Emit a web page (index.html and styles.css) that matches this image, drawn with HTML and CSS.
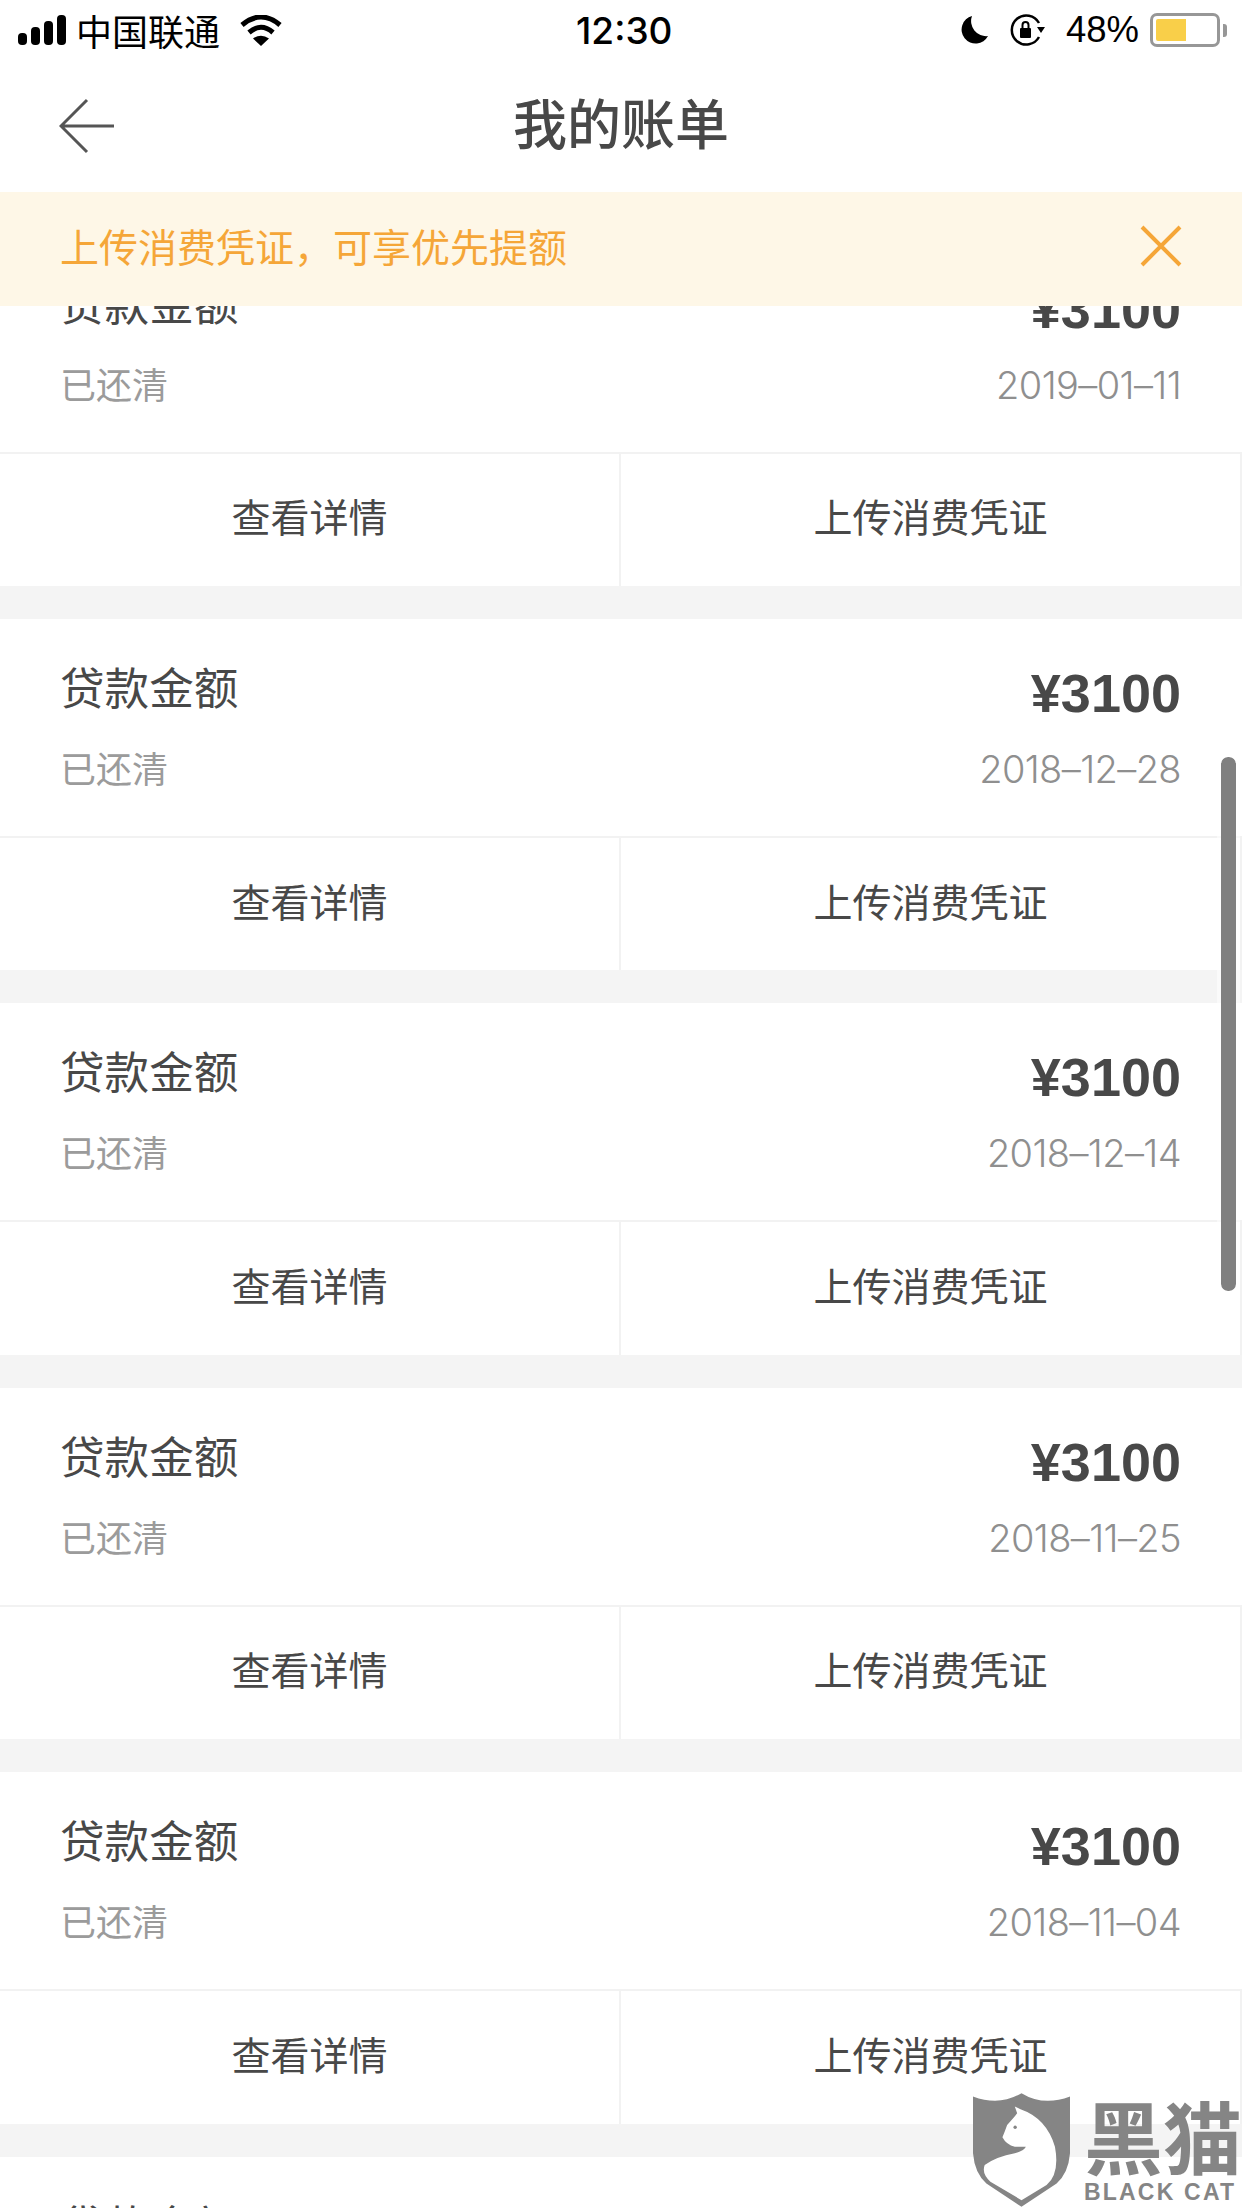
FILE: index.html
```html
<!DOCTYPE html>
<html lang="zh-CN">
<head>
  <meta charset="UTF-8" />
  <title>我的账单</title>
  <link rel="stylesheet" href="styles.css">
</head>
<body>
  <div class="phone">
    <div class="status-bar">
      <div class="status-left">
        <svg class="signal" width="48" height="30" viewBox="0 0 48 30">
          <rect x="0" y="18" width="9" height="12" rx="4" />
          <rect x="13" y="12" width="9" height="18" rx="4" />
          <rect x="26" y="6" width="9" height="24" rx="4" />
          <rect x="39" y="0" width="9" height="30" rx="4" />
        </svg>
        <span class="carrier">中国联通</span>
        <svg class="wifi" width="42" height="31" viewBox="0 0 42 31">
          <path d="M2 10Q21-6 40 10" fill="none" stroke="#000" stroke-width="5" />
          <path d="M9 17.500Q21 7 33 17.500" fill="none" stroke="#000" stroke-width="5" />
          <path d="M13 23.500Q21 18 29 23.500L21 31Z" />
        </svg>
      </div>
      <div class="status-time">12:30</div>
      <div class="status-right">
        <svg class="moon" width="28" height="28" viewBox="0 0 28 28">
          <path d="M11 0A14 14 0 1 0 27 20A15 15 0 0 1 11 0Z" />
        </svg>
        <svg class="rotate-lock" width="36" height="32" viewBox="0 0 36 32">
          <path d="M29 23A14.500 14.500 0 1 1 29 9" fill="none" stroke="#000" stroke-width="2.500" />
          <path d="M27 13L35 13L31 19Z" />
          <rect x="10" y="14" width="11" height="10" rx="1" />
          <path d="M12.500 14V11A3 3 0 0 1 18.500 11V14" fill="none" stroke="#000" stroke-width="2" />
        </svg>
        <span class="battery-pct">48%</span>
        <div class="battery">
          <div class="battery-body"><div class="battery-fill"></div></div>
          <div class="battery-nub"></div>
        </div>
      </div>
    </div>

    <header class="nav">
      <svg class="back" width="56" height="56" viewBox="0 0 56 56">
        <path d="M28 2L2 28L28 54M2 28H55" fill="none" stroke="#555" stroke-width="3" />
      </svg>
      <h1>我的账单</h1>
    </header>

    <main class="content">
      <div class="notice">
        <span class="notice-text">上传消费凭证，可享优先提额</span>
        <svg class="notice-close" width="42" height="42" viewBox="0 0 42 42">
          <path d="M2 2L40 40M40 2L2 40" fill="none" stroke="#f5a638" stroke-width="4" />
        </svg>
      </div>

      <div class="list">
        <section class="bill">
          <div class="bill-info">
            <div><div class="bill-label">贷款金额</div><div class="bill-state">已还清</div></div>
            <div class="bill-right"><div class="bill-amount">¥3100</div><div class="bill-date">2019–01–11</div></div>
          </div>
          <div class="bill-actions"><a>查看详情</a><a>上传消费凭证</a></div>
        </section>
        <section class="bill">
          <div class="bill-info">
            <div><div class="bill-label">贷款金额</div><div class="bill-state">已还清</div></div>
            <div class="bill-right"><div class="bill-amount">¥3100</div><div class="bill-date">2018–12–28</div></div>
          </div>
          <div class="bill-actions"><a>查看详情</a><a>上传消费凭证</a></div>
        </section>
        <section class="bill">
          <div class="bill-info">
            <div><div class="bill-label">贷款金额</div><div class="bill-state">已还清</div></div>
            <div class="bill-right"><div class="bill-amount">¥3100</div><div class="bill-date">2018–12–14</div></div>
          </div>
          <div class="bill-actions"><a>查看详情</a><a>上传消费凭证</a></div>
        </section>
        <section class="bill">
          <div class="bill-info">
            <div><div class="bill-label">贷款金额</div><div class="bill-state">已还清</div></div>
            <div class="bill-right"><div class="bill-amount">¥3100</div><div class="bill-date">2018–11–25</div></div>
          </div>
          <div class="bill-actions"><a>查看详情</a><a>上传消费凭证</a></div>
        </section>
        <section class="bill">
          <div class="bill-info">
            <div><div class="bill-label">贷款金额</div><div class="bill-state">已还清</div></div>
            <div class="bill-right"><div class="bill-amount">¥3100</div><div class="bill-date">2018–11–04</div></div>
          </div>
          <div class="bill-actions"><a>查看详情</a><a>上传消费凭证</a></div>
        </section>
        <section class="bill">
          <div class="bill-info">
            <div><div class="bill-label">贷款金额</div></div>
          </div>
        </section>
      </div>

      <div class="scrollbar"></div>

      <div class="watermark">
        <svg class="watermark-logo" width="97" height="114" viewBox="220 130 290 340">
          <path fill="#858585" d="M220 140Q300 170 365 130Q430 170 510 140L510 310Q505 370 470 400L365 470L260 400Q225 370 220 310Z" />
          <path fill="#fff" d="M345 170L362 178Q440 205 465 290Q480 370 440 405L365 450L272 395Q245 370 255 345Q290 320 345 310Q375 300 378 290L345 290Q320 285 308 262Q315 245 322 225Q345 200 352 190Z" />
          <circle cx="346" cy="232" r="5" fill="#858585" />
        </svg>
        <div class="watermark-text">
          <div class="watermark-cn">黑猫</div>
          <div class="watermark-en">BLACK CAT</div>
        </div>
      </div>
    </main>
  </div>
</body>
</html>
```

FILE: styles.css
```css
* {
  box-sizing: border-box;
}
body {
  margin: 0;
  font-family: "Noto Sans CJK SC", sans-serif;
  background-color: #fff;
  color: #484848;
}
.phone {
  width: 1242px;
  height: 2208px;
  display: flex;
  flex-direction: column;
  overflow: hidden;
}

/* status bar */
.status-bar {
  height: 60px;
  flex: none;
  display: flex;
  align-items: center;
  justify-content: space-between;
  color: #000;
  position: relative;
}
.status-left, .status-right {
  display: flex;
  align-items: center;
}
.status-left {
  padding-left: 18px;
}
.signal {
  margin-right: 10px;
}
.carrier {
  font-size: 36px;
  line-height: 40px;
  width: 144px;
  white-space: nowrap;
}
.wifi {
  margin-left: 20px;
}
.status-time {
  position: absolute;
  left: 576px;
  top: 11px;
  font-family: "Inter", sans-serif;
  font-weight: 500;
  font-size: 37px;
  line-height: 40px;
}
.status-right {
  padding-right: 15px;
}
.moon {
  margin-right: 21px;
}
.rotate-lock {
  margin-right: 20px;
}
.battery-pct {
  font-family: "Liberation Sans", sans-serif;
  font-size: 36.5px;
  line-height: 40px;
  margin-right: 11px;
}
.battery {
  display: flex;
  align-items: center;
}
.battery-body {
  width: 70px;
  height: 34px;
  border: 3px solid #979797;
  border-radius: 7px;
  padding: 3px;
}
.battery-fill {
  width: 30px;
  height: 100%;
  background-color: #f9cf49;
  border-radius: 2px 0 0 2px;
}
.battery-nub {
  width: 4px;
  height: 13px;
  margin-left: 3px;
  background-color: #979797;
  border-radius: 0 3px 3px 0;
}

/* nav */
.nav {
  height: 132px;
  flex: none;
  position: relative;
  display: flex;
  align-items: center;
  justify-content: center;
}
.nav h1 {
  margin: 0;
  font-size: 54px;
  font-weight: 500;
  line-height: 60px;
  color: #484848;
  margin-top: -8px;
}
.back {
  position: absolute;
  left: 59px;
  top: 38px;
}

/* list */
.content {
  flex: 1;
  position: relative;
  overflow: hidden;
  background-color: #f4f4f4;
}
.notice {
  position: absolute;
  left: 0;
  top: 0;
  right: 0;
  height: 114px;
  padding: 0 60px 6px 60px;
  display: flex;
  align-items: center;
  justify-content: space-between;
  background-color: #fef7e7;
  color: #f5a638;
  font-size: 39px;
  z-index: 2;
}
.notice-text {
  margin-bottom: 3px;
}
.list {
  padding-top: 42.6px;
}
.bill {
  height: 351.4px;
  margin-bottom: 33px;
  background-color: #fff;
}
.bill-info {
  height: 217px;
  padding: 44px 61px 0 60px;
  display: flex;
  justify-content: space-between;
}
.bill-label {
  font-size: 44.6px;
  line-height: 46px;
}
.bill-state {
  margin-top: 38px;
  font-size: 36px;
  line-height: 40px;
  color: #9b9b9b;
}
.bill-right {
  text-align: right;
  padding-top: 2px;
}
.bill-amount {
  font-family: "Liberation Sans", sans-serif;
  font-size: 54px;
  font-weight: 700;
  line-height: 56px;
}
.bill-date {
  margin-top: 28px;
  font-family: "Inter", sans-serif;
  font-weight: 300;
  font-size: 38px;
  letter-spacing: -0.6px;
  line-height: 40px;
  color: #8f8f8f;
}
.bill-actions {
  height: 134.4px;
  border-top: 2px solid #f2f2f2;
  display: flex;
}
.bill-actions a {
  width: 50%;
  display: flex;
  align-items: center;
  justify-content: center;
  padding-bottom: 9px;
  font-size: 39px;
  border-right: 2px solid #f2f2f2;
}

/* scrollbar */
.scrollbar {
  position: absolute;
  left: 1217px;
  top: 561px;
  width: 23px;
  height: 542px;
  background-color: #808080;
  border: 4px solid rgba(255,255,255,0.5);
  border-radius: 11px;
  background-clip: padding-box;
  z-index: 1;
}

/* watermark */
.watermark {
  position: absolute;
  left: 973px;
  top: 1901px;
  display: flex;
  z-index: 3;
}
.watermark-text {
  margin-left: 14px;
  padding-top: 2px;
  color: #858585;
}
.watermark-cn {
  font-size: 79px;
  font-weight: 700;
  line-height: 79px;
  white-space: nowrap;
}
.watermark-en {
  margin-top: 7px;
  font-family: "Liberation Sans", sans-serif;
  font-size: 23px;
  font-weight: 700;
  line-height: 23px;
  letter-spacing: 2.2px;
  white-space: nowrap;
}
```
